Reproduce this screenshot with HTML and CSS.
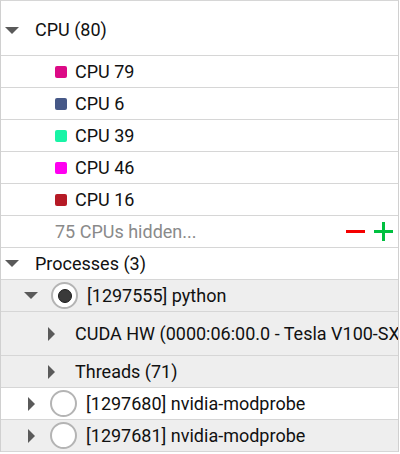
FILE: index.html
```html
<!DOCTYPE html>
<html>
<head>
<meta charset="utf-8">
<link rel="stylesheet" href="styles.css">
</head>
<body>
<div class="tree">
  <div class="row top">
    <span class="tri down lvl0"></span>
    <span class="label">CPU (80)</span>
  </div>
  <div class="row cpu"><span class="sw" style="background:#dc0a86"></span><span class="label">CPU 79</span></div>
  <div class="row cpu"><span class="sw" style="background:#465887"></span><span class="label">CPU 6</span></div>
  <div class="row cpu"><span class="sw" style="background:#18f4a6"></span><span class="label">CPU 39</span></div>
  <div class="row cpu"><span class="sw" style="background:#ff00f0"></span><span class="label">CPU 46</span></div>
  <div class="row cpu"><span class="sw" style="background:#b61a26"></span><span class="label">CPU 16</span></div>
  <div class="row cpu hidden">
    <span class="label muted">75 CPUs hidden...</span>
    <span class="actions">
      <span class="minus"></span>
      <span class="plus"></span>
    </span>
  </div>
  <div class="row">
    <span class="tri down lvl0"></span>
    <span class="label">Processes (3)</span>
  </div>
  <div class="row grey proc">
    <span class="tri down lvl1"></span>
    <span class="radio on"></span>
    <span class="label">[1297555] python</span>
  </div>
  <div class="row grey tall sub">
    <span class="tri right lvl2"></span>
    <span class="label clip">CUDA HW (0000:06:00.0 - Tesla V100-SXM2-16GB)</span>
  </div>
  <div class="row grey sub">
    <span class="tri right lvl2"></span>
    <span class="label">Threads (71)</span>
  </div>
  <div class="row proc">
    <span class="tri right lvl1"></span>
    <span class="radio"></span>
    <span class="label">[1297680] nvidia-modprobe</span>
  </div>
  <div class="row grey proc">
    <span class="tri right lvl1"></span>
    <span class="radio"></span>
    <span class="label">[1297681] nvidia-modprobe</span>
  </div>
</div>
</body>
</html>
```

FILE: styles.css
```css
html, body {
  margin: 0;
  padding: 0;
  background: #fff;
}
body {
  font-family: Roboto, "Liberation Sans", sans-serif;
  font-size: 18px;
  color: #111;
}
.tree {
  width: 399px;
  box-sizing: border-box;
  border-top: 1px solid #d6d6d6;
  border-left: 1px solid #d0d0d0;
  border-right: 1px solid #d0d0d0;
  overflow: hidden;
}
.row {
  display: flex;
  align-items: center;
  height: 32px;
  box-sizing: border-box;
  border-bottom: 1px solid #d6d6d6;
  white-space: nowrap;
  overflow: hidden;
}
.row.top {
  height: 55px;
  padding-top: 4px;
}
.row.grey {
  background: #eeeeee;
}
.row.tall {
  height: 44px;
}
.row.cpu {
  padding-left: 54px;
}
.row.sub {
  padding-left: 47px;
}
.row.proc {
  padding-left: 0;
}
.tri {
  flex: none;
  width: 0;
  height: 0;
}
.tri.down {
  border-left: 7px solid transparent;
  border-right: 7px solid transparent;
  border-top: 7px solid #5a5a5a;
}
.tri.right {
  border-top: 7px solid transparent;
  border-bottom: 7px solid transparent;
  border-left: 7px solid #5a5a5a;
}
.tri.down.lvl0 {
  margin-left: 4px;
  margin-right: 16px;
}
.row.proc .tri.down.lvl1 {
  margin-left: 23px;
  margin-right: 13px;
}
.row.proc .tri.right.lvl1 {
  margin-left: 27px;
  margin-right: 15px;
}
.tri.right.lvl2 {
  margin-right: 20px;
}
.label {
  line-height: 22px;
}
.clip {
  overflow: hidden;
}
.muted {
  color: #8a8a8a;
}
.sw {
  flex: none;
  width: 12px;
  height: 12px;
  border-radius: 2px;
  margin-right: 8px;
}
.hidden {
  justify-content: space-between;
  padding-right: 5px;
}
.actions {
  display: flex;
  align-items: center;
  gap: 9px;
}
.minus {
  width: 19px;
  height: 3px;
  background: #f50000;
}
.plus {
  position: relative;
  width: 19px;
  height: 19px;
}
.plus::before, .plus::after {
  content: "";
  position: absolute;
  background: #00c040;
}
.plus::before {
  left: 0;
  top: 8px;
  width: 19px;
  height: 3px;
}
.plus::after {
  left: 8px;
  top: 0;
  width: 3px;
  height: 19px;
}
.radio {
  flex: none;
  position: relative;
  width: 27px;
  height: 27px;
  box-sizing: border-box;
  border: 2px solid #b4b4b4;
  border-radius: 50%;
  background: #fff;
  margin-right: 9px;
}
.radio.on::after {
  content: "";
  position: absolute;
  left: 4.5px;
  top: 4.5px;
  width: 14px;
  height: 14px;
  box-sizing: border-box;
  border-radius: 50%;
  background: #3a3a3a;
  border: 1.5px solid #1c1c1c;
}
```
